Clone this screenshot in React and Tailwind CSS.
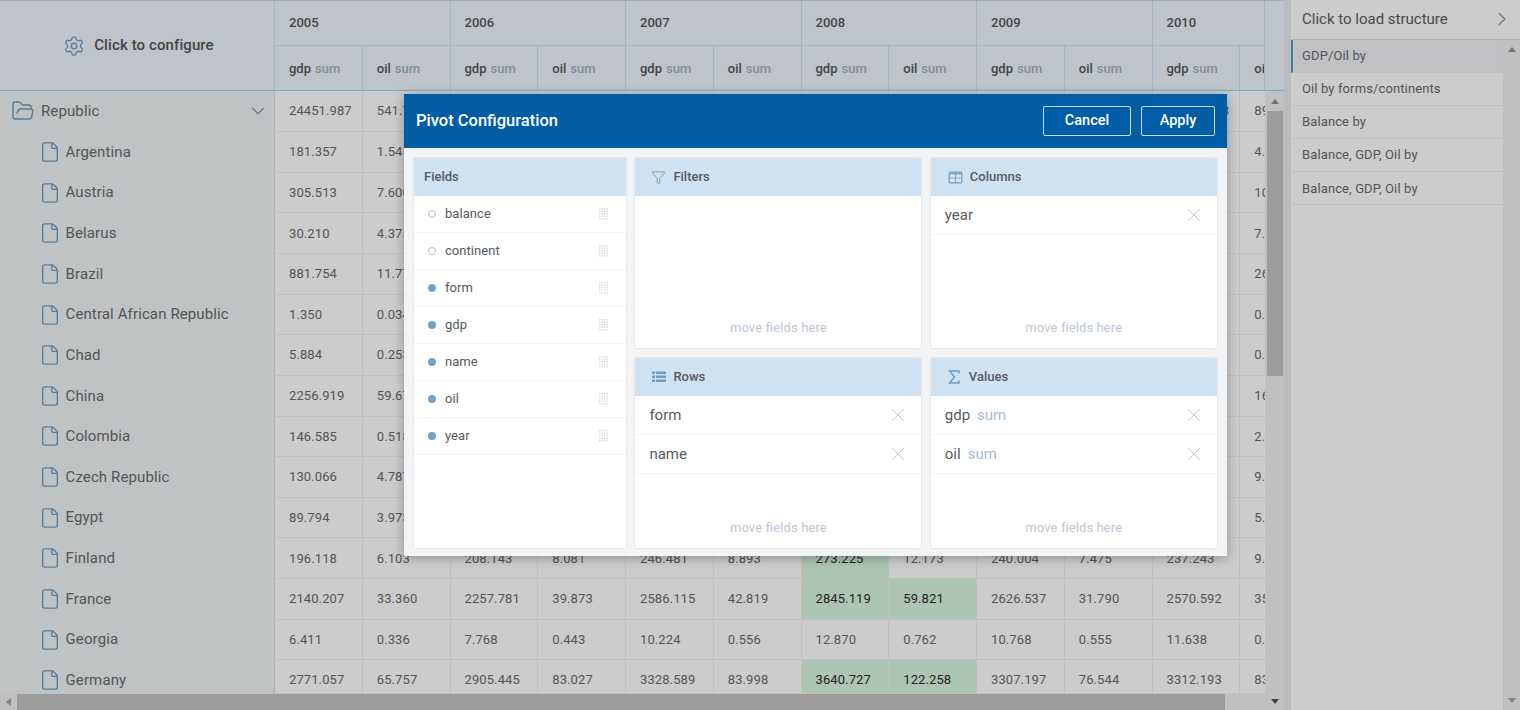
import React from 'react'
import { ChevronDown, ChevronRight, File, FolderOpen, Funnel, Settings, X } from 'lucide-react'

const years = ['2005', '2006', '2007', '2008', '2009', '2010']

const rows = [
  ['Republic', ['24451.987', '541.738', '25800.120', '590.114', '28100.650', '640.224', '30120.330', '702.510', '27900.445', '610.382', '28741.138', '892.410']],
  ['Argentina', ['181.357', '1.545', '212.504', '1.802', '260.071', '2.113', '326.582', '2.420', '307.155', '2.244', '368.711', '4.120']],
  ['Austria', ['305.513', '7.600', '325.012', '8.120', '386.120', '9.344', '414.190', '10.820', '384.707', '9.540', '377.680', '10.330']],
  ['Belarus', ['30.210', '4.375', '36.962', '4.812', '45.276', '5.220', '60.763', '6.102', '49.209', '5.744', '55.221', '7.140']],
  ['Brazil', ['881.754', '11.770', '1107.640', '14.220', '1397.084', '17.890', '1695.825', '21.440', '1667.020', '20.120', '2208.872', '26.310']],
  ['Central African Republic', ['1.350', '0.034', '1.470', '0.036', '1.698', '0.040', '1.984', '0.044', '1.981', '0.042', '1.986', '0.046']],
  ['Chad', ['5.884', '0.253', '6.520', '0.280', '7.631', '0.301', '9.360', '0.344', '8.730', '0.312', '10.658', '0.380']],
  ['China', ['2256.919', '59.670', '2729.784', '72.340', '3523.094', '90.120', '4558.431', '120.660', '5059.420', '130.270', '6039.659', '164.220']],
  ['Colombia', ['146.585', '0.518', '162.590', '0.612', '207.417', '0.840', '244.053', '1.120', '234.045', '1.340', '287.018', '2.110']],
  ['Czech Republic', ['130.066', '4.787', '148.374', '5.120', '180.482', '6.220', '225.427', '7.440', '197.186', '6.880', '198.494', '9.120']],
  ['Egypt', ['89.794', '3.973', '107.484', '4.210', '130.479', '4.660', '162.818', '5.020', '188.984', '5.240', '218.894', '5.610']],
  ['Finland', ['196.118', '6.103', '208.143', '8.081', '246.481', '8.893', '273.225', '12.173', '240.004', '7.475', '237.243', '9.120']],
  ['France', ['2140.207', '33.360', '2257.781', '39.873', '2586.115', '42.819', '2845.119', '59.821', '2626.537', '31.790', '2570.592', '35.240']],
  ['Georgia', ['6.411', '0.336', '7.768', '0.443', '10.224', '0.556', '12.870', '0.762', '10.768', '0.555', '11.638', '0.610']],
  ['Germany', ['2771.057', '65.757', '2905.445', '83.027', '3328.589', '83.998', '3640.727', '122.258', '3307.197', '76.544', '3312.193', '83.410']],
]

// cells painted green in the 2008 columns
const highlighted = {
  Finland: [6],
  France: [6, 7],
  Germany: [6, 7],
}

const reports = ['GDP/Oil by', 'Oil by forms/continents', 'Balance by', 'Balance, GDP, Oil by', 'Balance, GDP, Oil by']

const fields = [
  ['balance', false],
  ['continent', false],
  ['form', true],
  ['gdp', true],
  ['name', true],
  ['oil', true],
  ['year', true],
]

function DragDots() {
  const dots = []
  for (let x = 0; x < 4; x++) {
    for (let y = 0; y < 5; y++) {
      dots.push(<rect key={x + '-' + y} x={x * 2.5} y={y * 2.5} width="1.5" height="1.5" fill="#dcdfe2" />)
    }
  }
  return (
    <svg width="9" height="12" viewBox="0 0 9 12" className="shrink-0">
      {dots}
    </svg>
  )
}

function ColumnsIcon() {
  return (
    <svg width="15" height="13" viewBox="0 0 15 13" className="shrink-0">
      <rect x="0.5" y="0.5" width="14" height="12" rx="1.5" fill="#7fa6c6" />
      <rect x="2" y="3.5" width="5" height="3" fill="#dbe8f3" />
      <rect x="8" y="3.5" width="5" height="3" fill="#dbe8f3" />
      <rect x="2" y="7.5" width="5" height="3.5" fill="#dbe8f3" />
      <rect x="8" y="7.5" width="5" height="3.5" fill="#dbe8f3" />
    </svg>
  )
}

function RowsIcon() {
  return (
    <svg width="14" height="12" viewBox="0 0 14 12" className="shrink-0">
      <rect width="3" height="2.5" y="0.5" fill="#6f9dc1" />
      <rect width="10" height="2.5" x="4" y="0.5" fill="#6f9dc1" />
      <rect width="3" height="2.5" y="4.5" fill="#6f9dc1" />
      <rect width="10" height="2.5" x="4" y="4.5" fill="#6f9dc1" />
      <rect width="3" height="2.5" y="8.5" fill="#6f9dc1" />
      <rect width="10" height="2.5" x="4" y="8.5" fill="#6f9dc1" />
    </svg>
  )
}

function SigmaIcon() {
  return (
    <svg width="12" height="14" viewBox="0 0 12 14" className="shrink-0 mr-[2px]">
      <path d="M11 3.5V1H1.5L6.5 7L1.5 13H11V10.5" fill="none" stroke="#6f9dc1" strokeWidth="1.5" />
    </svg>
  )
}

function Arrow({ dir }) {
  const cls = {
    up: 'border-x-[4px] border-b-[5px] border-x-transparent border-b-[#8f8f8f]',
    down: 'border-x-[4px] border-t-[5px] border-x-transparent border-t-[#505050]',
    downLight: 'border-x-[4px] border-t-[5px] border-x-transparent border-t-[#a3a3a3]',
    left: 'border-y-[4px] border-r-[5px] border-y-transparent border-r-[#a3a3a3]',
  }[dir]
  return <div className={'w-0 h-0 ' + cls} />
}

function Panel({ title, icon, items }) {
  return (
    <div className="flex flex-col bg-white shadow-[0_0_2px_rgba(0,0,0,0.14)]">
      <div className="h-[38px] shrink-0 bg-[#cfe2f1] flex items-center gap-[7px] pl-[17px] text-[13px] font-medium text-[#555b61]">
        {icon}
        {title}
      </div>
      {items.map(([name, agg]) => (
        <div key={name} className="h-[39px] shrink-0 border-b border-[#f3f4f5] flex items-center pl-[14px] pr-[12px] text-[15px] text-[#555b61]">
          <span>{name}</span>
          {agg && <span className="ml-[7px] text-[#a9bbd0]">{agg}</span>}
          <X size={22} strokeWidth={1} className="ml-auto text-[#c0c5cb]" />
        </div>
      ))}
      <div className="mt-auto pb-[11px] text-center text-[13px] tracking-[0.1px] text-[#bcc6d4]">move fields here</div>
    </div>
  )
}

export default function App() {
  return (
    <div className="relative w-[1520px] h-[710px] overflow-hidden bg-white flex font-['Roboto',sans-serif]">
      {/* Pivot table */}
      <div className="w-[1284px] shrink-0 flex flex-col">
        <div className="h-[91px] shrink-0 flex bg-[#eff6fd] border-t border-[#d0d7dd] border-b border-b-[#8bdcf5]">
          <div className="w-[275px] shrink-0 border-r border-[#d2e2ee] flex items-center justify-center gap-[9px] pl-[3px] text-[15px] tracking-[0.1px] font-medium text-[#555]">
            <Settings size={22} strokeWidth={1.5} className="text-[#6f9dc1]" />
            Click to configure
          </div>
          <div className="w-[990px] shrink-0 overflow-hidden border-r border-[#d2e2ee]">
            <div className="grid grid-cols-[repeat(12,87.75px)] w-[1053px] h-full grid-rows-[44.5px_1fr]">
              {years.map(y => (
                <div key={y} className="col-span-2 border-r border-b border-[#d2e2ee] flex items-center pl-[14px] text-[13px] font-medium text-[#555]">
                  {y}
                </div>
              ))}
              {years.flatMap(y => ['gdp', 'oil'].map(m => (
                <div key={y + m} className="border-r border-[#d2e2ee] flex items-center pl-[14px] pt-[1px] text-[13px] font-medium text-[#555]">
                  {m}<span className="ml-[4px] text-[#a8b0b8]">sum</span>
                </div>
              )))}
            </div>
          </div>
        </div>

        <div className="flex h-[602px] shrink-0">
          <div className="w-[1265px] shrink-0 overflow-hidden">
            {rows.map(([name, values], i) => (
              <div key={name} className={'flex ' + (i === 0 ? 'h-[40.2px]' : 'h-[40.64px] border-t border-[#f0f0f0]')}>
                <div className={'w-[275px] shrink-0 bg-[#f0f4f6] border-r border-[#d9dfe3] flex items-center text-[15px] tracking-[0.12px] text-[#6a6a6a] ' + (i === 0 ? 'pl-[11px]' : 'pl-[39px]')}>
                  {i === 0
                    ? <FolderOpen size={24} strokeWidth={1.5} className="mr-[6px] text-[#6f9dc1]" />
                    : <File size={22} strokeWidth={1.5} className="mr-[4.5px] text-[#6f9dc1]" />}
                  <span>{name}</span>
                  {i === 0 && <ChevronDown size={22} strokeWidth={1.5} className="ml-auto mr-[5.5px] text-[#8f9aa5]" />}
                </div>
                <div className="grid grid-cols-[repeat(12,87.75px)] shrink-0">
                  {values.map((v, j) => {
                    const green = highlighted[name] && highlighted[name].includes(j)
                    return (
                      <div
                        key={j}
                        className={'border-r border-[#f0f0f0] flex items-center pl-[14px] text-[13px] tracking-[0.1px] ' + (green ? 'bg-[#d8f7e2] text-[#2b2b2b]' : 'text-[#6a6a6a]')}
                      >
                        {v}
                      </div>
                    )
                  })}
                </div>
              </div>
            ))}
          </div>
          {/* vertical scrollbar */}
          <div className="w-[19px] shrink-0 bg-[#f1f1f1] flex flex-col items-center">
            <div className="h-[20px] shrink-0 flex items-center justify-center"><Arrow dir="up" /></div>
            <div className="w-[16px] h-[265px] bg-[#c3c3c3]" />
          </div>
        </div>

        {/* horizontal scrollbar */}
        <div className="h-[17px] shrink-0 bg-[#f1f1f1] flex items-center">
          <div className="w-[17px] flex justify-center"><Arrow dir="left" /></div>
          <div className="w-[1208px] h-[16px] bg-[#c3c3c3]" />
          <div className="ml-auto w-[19px] flex justify-center"><Arrow dir="down" /></div>
        </div>
      </div>

      {/* Splitter */}
      <div className="w-[7px] shrink-0 bg-[#e8ebee]" />

      {/* Structure list */}
      <div className="flex-1 flex flex-col min-w-0">
        <div className="h-[39.5px] shrink-0 border-b border-[#e0e0e0] flex items-center pl-[11px] pr-[7.5px] text-[15px] text-[#5c5c5c]">
          Click to load structure
          <ChevronRight size={22} strokeWidth={1.5} className="ml-auto text-[#8f9aa5]" />
        </div>
        <div className="flex-1 flex min-h-0">
          <div className="w-[212px] shrink-0">
            {reports.map((r, i) => (
              <div
                key={i}
                className={'h-[33.2px] flex items-center text-[13px] tracking-[0.12px] text-[#6a6a6a] border-b border-[#f0f0f0] ' + (i === 0 ? 'bg-[#f0f2f6] border-l-2 border-l-[#39a5bd] pl-[9px]' : 'pl-[11px]')}
              >
                {r}
              </div>
            ))}
          </div>
          <div className="w-[17px] shrink-0 bg-[#f1f1f1] flex flex-col items-center justify-between py-[7px]">
            <Arrow dir="up" />
            <Arrow dir="downLight" />
          </div>
        </div>
      </div>

      {/* Backdrop */}
      <div className="absolute inset-0 bg-black/20" />

      {/* Configuration dialog */}
      <div className="absolute left-[404px] top-[94px] w-[823px] h-[462px] bg-[#f3f4f5] flex flex-col rounded-t-[2px] shadow-[0_2px_12px_rgba(0,0,0,0.3)]">
        <div className="h-[54px] shrink-0 bg-[#005da6] flex items-center pl-[12px] pr-[12px]">
          <span className="text-[16.5px] font-medium text-white">Pivot Configuration</span>
          <button className="ml-auto w-[88px] h-[30px] rounded-[2px] border border-[#c5d9ea] text-[14.5px] font-medium text-white">Cancel</button>
          <button className="ml-[10px] w-[74px] h-[30px] rounded-[2px] border border-[#c5d9ea] text-[14.5px] font-medium text-white">Apply</button>
        </div>
        <div className="flex-1 min-h-0 grid grid-cols-[212px_286px_286px] grid-rows-[190px_190px] gap-x-[9.4px] gap-y-[10px] px-[10px] pt-[10px]">
          <div className="row-span-2 flex flex-col bg-white shadow-[0_0_2px_rgba(0,0,0,0.14)]">
            <div className="h-[38px] shrink-0 bg-[#cfe2f1] flex items-center pl-[10px] pb-[1px] text-[13px] font-medium text-[#555b61]">Fields</div>
            {fields.map(([name, used]) => (
              <div key={name} className="h-[37px] shrink-0 border-b border-[#f3f4f5] flex items-center pl-[14px] pr-[18px] text-[13px] tracking-[0.05px] text-[#555b61]">
                <span className={'w-[8px] h-[8px] rounded-full mr-[9px] ' + (used ? 'bg-[#73a2c6]' : 'border border-[#9fc0d9]')} />
                {name}
                <span className="ml-auto"><DragDots /></span>
              </div>
            ))}
          </div>
          <Panel title="Filters" icon={<Funnel size={15} strokeWidth={1.5} className="-ml-[1px] text-[#6f9dc1]" />} items={[]} />
          <Panel title="Columns" icon={<ColumnsIcon />} items={[['year']]} />
          <Panel title="Rows" icon={<RowsIcon />} items={[['form'], ['name']]} />
          <Panel title="Values" icon={<SigmaIcon />} items={[['gdp', 'sum'], ['oil', 'sum']]} />
        </div>
      </div>
    </div>
  )
}
